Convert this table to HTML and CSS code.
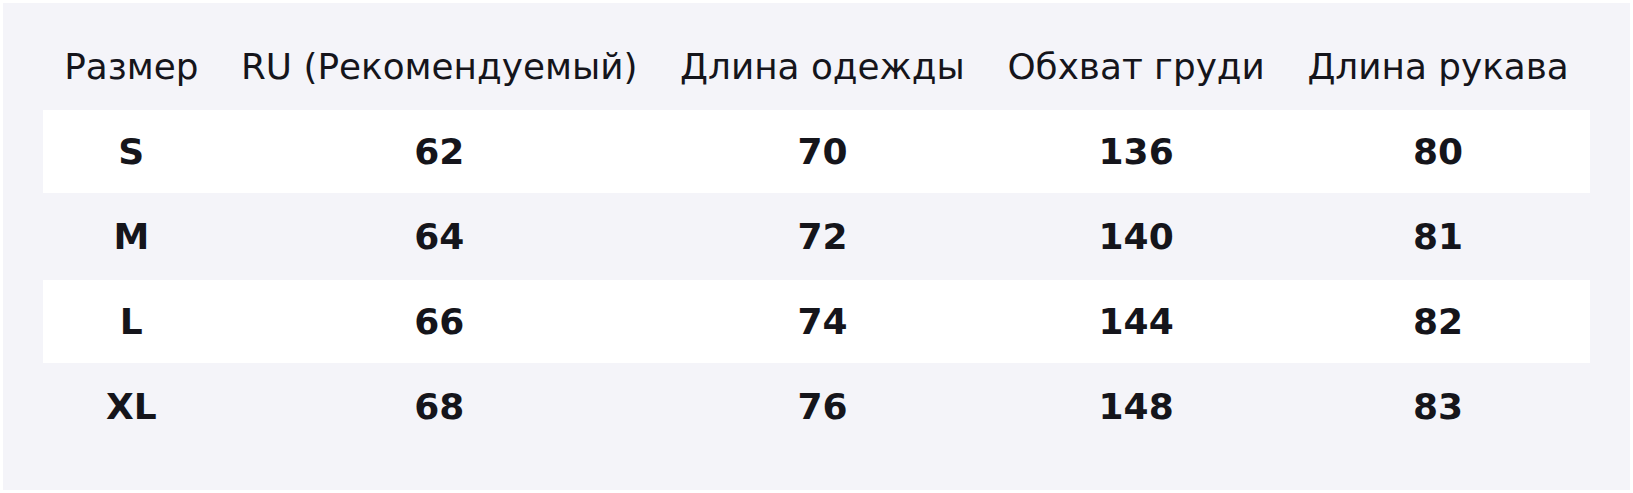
FILE: index.html
```html
<!DOCTYPE html>
<html lang="ru">
<head>
<meta charset="utf-8">
<link rel="stylesheet" href="styles.css">
</head>
<body>
<div class="panel">
  <table class="sizes">
    <thead>
      <tr>
        <th>Размер</th>
        <th>RU (Рекомендуемый)</th>
        <th>Длина одежды</th>
        <th>Обхват груди</th>
        <th>Длина рукава</th>
      </tr>
    </thead>
    <tbody>
      <tr class="light"><td>S</td><td>62</td><td>70</td><td>136</td><td>80</td></tr>
      <tr><td>M</td><td>64</td><td>72</td><td>140</td><td>81</td></tr>
      <tr class="light"><td>L</td><td>66</td><td>74</td><td>144</td><td>82</td></tr>
      <tr><td>XL</td><td>68</td><td>76</td><td>148</td><td>83</td></tr>
    </tbody>
  </table>
</div>
</body>
</html>
```

FILE: styles.css
```css
html, body {
  margin: 0;
  background: #ffffff;
}
body {
  padding: 3px;
}
.panel {
  background: #f4f4f9;
  height: 487px;
  box-sizing: border-box;
  padding: 20px 40px 40px;
  font-family: "DejaVu Sans", sans-serif;
  color: #15151b;
}
.sizes {
  width: 100%;
  border-collapse: separate;
  border-spacing: 0 2px;
}
.sizes th,
.sizes td {
  height: 83px;
  padding: 0 21px;
  text-align: center;
  vertical-align: middle;
  white-space: nowrap;
}
.sizes th {
  font-size: 35.8px;
  font-weight: normal;
}
.sizes td {
  font-size: 36px;
  font-weight: bold;
}
.sizes tr.light {
  background: #ffffff;
}
```
